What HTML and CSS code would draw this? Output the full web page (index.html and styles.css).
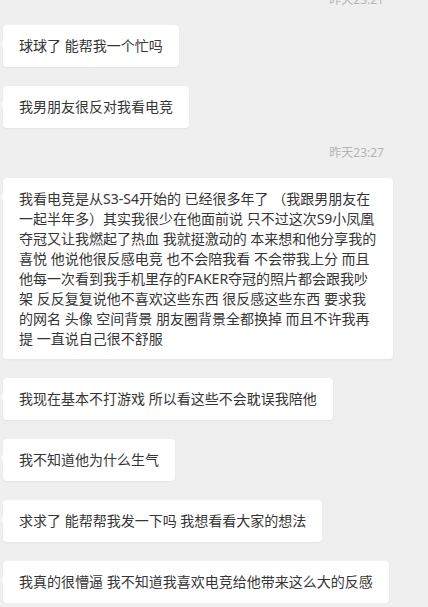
FILE: index.html
```html
<!DOCTYPE html>
<html lang="zh-CN">
<head>
    <meta charset="UTF-8">
    <meta name="viewport" content="width=device-width, initial-scale=1.0">
    <title>聊天记录</title>
    <link rel="stylesheet" href="styles.css">
</head>
<body>

    <div class="chat">
        <div class="time">昨天23:21</div>

        <div class="bubble">球球了 能帮我一个忙吗</div>
        <div class="bubble">我男朋友很反对我看电竞</div>

        <div class="time">昨天23:27</div>

        <!-- long message, line breaks kept as in the original -->
        <div class="bubble long">我看电竞是从S3-S4开始的 已经很多年了 （我跟男朋友在<br>一起半年多）其实我很少在他面前说 只不过这次S9小凤凰<br>夺冠又让我燃起了热血 我就挺激动的 本来想和他分享我的<br>喜悦 他说他很反感电竞 也不会陪我看 不会带我上分 而且<br>他每一次看到我手机里存的FAKER夺冠的照片都会跟我吵<br>架 反反复复说他不喜欢这些东西 很反感这些东西 要求我<br>的网名 头像 空间背景 朋友圈背景全都换掉 而且不许我再<br>提 一直说自己很不舒服</div>

        <div class="bubble">我现在基本不打游戏 所以看这些不会耽误我陪他</div>
        <div class="bubble">我不知道他为什么生气</div>
        <div class="bubble">求求了 能帮帮我发一下吗 我想看看大家的想法</div>
        <div class="bubble">我真的很懵逼 我不知道我喜欢电竞给他带来这么大的反感</div>
    </div>

</body>
</html>
```

FILE: styles.css
```css
body {
    margin: 0;
    background-color: #efefef;
    font-family: "Noto Sans", "Noto Sans CJK SC", sans-serif;
    color: #353535;
    overflow: hidden;
}

.chat {
    display: flex;
    flex-direction: column;
    gap: 19px;
    margin-top: -6px;
}

.time {
    align-self: flex-end;
    margin-right: 44px;
    font-size: 12px;
    line-height: 12px;
    color: #b4b4b4;
}

.bubble {
    position: relative;
    align-self: flex-start;
    margin-left: 3px;
    padding: 11px 16px;
    background-color: #fff;
    border-radius: 4px;
    font-size: 14px;
    line-height: 20px;
    white-space: nowrap;
    box-shadow: 0 1px 2px rgba(0, 0, 0, 0.05);
}

/* small tail on the left side of each bubble */
.bubble::before {
    content: "";
    position: absolute;
    left: -3px;
    top: 15px;
    border-top: 4px solid transparent;
    border-bottom: 4px solid transparent;
    border-right: 3px solid #f7f7f7;
}

.long {
    padding: 11px 17px 10px 16px;
}
```
